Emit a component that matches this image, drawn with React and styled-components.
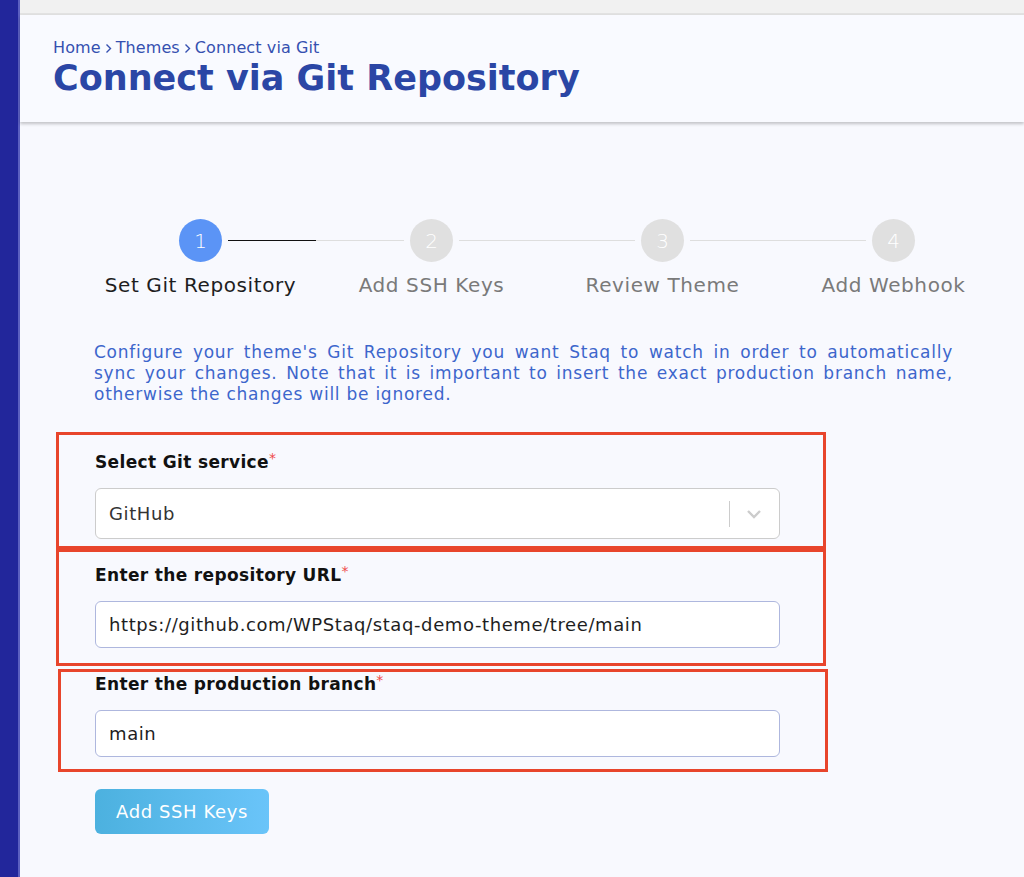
import React from "react";
import styled, { createGlobalStyle } from "styled-components";

const GlobalStyle = createGlobalStyle`
  * {
    box-sizing: border-box;
  }
  body {
    margin: 0;
    background: #f8f9fe;
    font-family: "DejaVu Sans", Inter, sans-serif;
  }
`;

const steps = [
  { n: 1, label: "Set Git Repository" },
  { n: 2, label: "Add SSH Keys" },
  { n: 3, label: "Review Theme" },
  { n: 4, label: "Add Webhook" },
];

const descLines = [
  "Configure your theme's Git Repository you want Staq to watch in order to automatically",
  "sync your changes. Note that it is important to insert the exact production branch name,",
  "otherwise the changes will be ignored.",
];

function Chevron() {
  return (
    <svg width="9" height="11" viewBox="0 0 9 11" fill="none">
      <path d="M2.5 1.5 L6.5 5.5 L2.5 9.5" stroke="#3550b0" strokeWidth="1.4" />
    </svg>
  );
}

export default function App() {
  return (
    <>
      <GlobalStyle />
      <Page>
        <Sidebar />
        <Main>
          <TopStrip />
          <Header>
            <Breadcrumb>
              <span>Home</span>
              <Chevron />
              <span>Themes</span>
              <Chevron />
              <span>Connect via Git</span>
            </Breadcrumb>
            <Title>Connect via Git Repository</Title>
          </Header>
          <Content>
            <Stepper>
              {steps.map((step, i) => (
                <Step key={step.n}>
                  <StepHead>
                    <HalfLine $hidden={i === 0} />
                    <Circle $active={i === 0}>{step.n}</Circle>
                    <HalfLine $hidden={i === steps.length - 1} $done={i === 0} />
                  </StepHead>
                  <StepLabel $active={i === 0}>{step.label}</StepLabel>
                </Step>
              ))}
            </Stepper>

            <Description>
              {descLines.map((line, i) => (
                <DescLine key={i} $last={i === descLines.length - 1}>
                  {line}
                </DescLine>
              ))}
            </Description>

            <Field $pt={16} $pb={7} $mt={27}>
              <Label>
                Select Git service<Star>*</Star>
              </Label>
              <SelectBox>
                <SelectValue>GitHub</SelectValue>
                <Indicators>
                  <Separator />
                  <svg width="20" height="20" viewBox="0 0 20 20">
                    <path
                      d="M4 7 L10 13 L16 7"
                      fill="none"
                      stroke="#cccccc"
                      strokeWidth="2.4"
                    />
                  </svg>
                </Indicators>
              </SelectBox>
            </Field>

            <Field $pt={12} $pb={15}>
              <Label>
                Enter the repository URL<Star>*</Star>
              </Label>
              <Input
                readOnly
                value="https://github.com/WPStaq/staq-demo-theme/tree/main"
              />
            </Field>

            <Field $pt={1} $pb={12} $shift={2} $mt={3}>
              <Label>
                Enter the production branch<Star>*</Star>
              </Label>
              <Input readOnly value="main" />
            </Field>

            <Button>Add SSH Keys</Button>
          </Content>
        </Main>
      </Page>
    </>
  );
}

const Page = styled.div`
  display: flex;
  min-height: 877px;
`;

const Sidebar = styled.div`
  width: 20px;
  flex-shrink: 0;
  background: #22269b;
  border-right: 2px solid #5b5fc0;
`;

const Main = styled.div`
  flex: 1;
  display: flex;
  flex-direction: column;
  min-width: 0;
`;

const TopStrip = styled.div`
  height: 15px;
  background: #f1f1f1;
  border-bottom: 2px solid #e2e2e2;
`;

const Header = styled.div`
  height: 107px;
  padding: 24px 33px 0;
  background: #f9faff;
  box-shadow: 0 2px 3px rgba(0, 0, 0, 0.22);
  position: relative;
  z-index: 1;
`;

const Breadcrumb = styled.div`
  display: flex;
  align-items: center;
  gap: 3px;
  color: #3550b0;
  font-size: 16px;
  line-height: 18px;
  letter-spacing: 0.1px;
`;

const Title = styled.h1`
  margin: 0;
  color: #2b46a5;
  font-size: 35px;
  line-height: 42px;
  font-weight: 700;
`;

const Content = styled.div`
  padding: 97px 0 40px 36px;
`;

const Stepper = styled.div`
  display: grid;
  grid-template-columns: repeat(4, 231px);
  margin-left: 29px;
`;

const Step = styled.div`
  display: flex;
  flex-direction: column;
  align-items: center;
`;

const StepHead = styled.div`
  display: flex;
  align-items: center;
  width: 100%;
  gap: 6px;
`;

const HalfLine = styled.div`
  flex: 1;
  height: ${(p) => (p.$done ? "1.5px" : "1px")};
  background: ${(p) => (p.$hidden ? "transparent" : p.$done ? "#111111" : "#dedede")};
`;

const Circle = styled.div`
  width: 43px;
  height: 43px;
  border-radius: 50%;
  flex-shrink: 0;
  display: flex;
  align-items: center;
  justify-content: center;
  background: ${(p) => (p.$active ? "#5b94f6" : "#e0e0e0")};
  color: #ffffff;
  font-size: 20px;
  font-weight: 300;
`;

const StepLabel = styled.div`
  margin-top: 11px;
  font-size: 20px;
  line-height: 24px;
  letter-spacing: 0.6px;
  white-space: nowrap;
  color: ${(p) => (p.$active ? "#1e1e1e" : "#7a7a7a")};
`;

const Description = styled.div`
  margin: 45px 0 0 38px;
  width: 859px;
  color: #3d66cc;
  font-size: 17px;
  line-height: 21px;
  letter-spacing: 0.75px;
`;

const DescLine = styled.span`
  display: block;
  text-align: justify;
  text-align-last: ${(p) => (p.$last ? "left" : "justify")};
`;

const Field = styled.div`
  width: 770px;
  margin-top: ${(p) => p.$mt ?? 0}px;
  margin-left: ${(p) => p.$shift ?? 0}px;
  padding: ${(p) => p.$pt}px 0 ${(p) => p.$pb}px ${(p) => 36 - (p.$shift ?? 0)}px;
  border: 3px solid #e8452c;
`;

const Label = styled.div`
  font-size: 17px;
  line-height: 22px;
  font-weight: 700;
  letter-spacing: 0.35px;
  color: #111111;
  margin-bottom: 15px;
`;

const Star = styled.span`
  color: #ef4b4b;
  font-weight: 400;
  font-size: 14px;
  vertical-align: top;
  line-height: 14px;
`;

const SelectBox = styled.div`
  width: 685px;
  height: 51px;
  background: #ffffff;
  border: 1px solid #cccccc;
  border-radius: 6px;
  display: flex;
  align-items: center;
  padding-left: 13px;
`;

const SelectValue = styled.div`
  flex: 1;
  font-size: 18px;
  letter-spacing: 0.6px;
  color: #333333;
`;

const Indicators = styled.div`
  display: flex;
  align-items: center;
  gap: 14px;
  padding-right: 15px;
`;

const Separator = styled.div`
  width: 1px;
  height: 26px;
  background: #cccccc;
`;

const Input = styled.input`
  display: block;
  width: 685px;
  height: 47px;
  padding: 0 13px;
  border: 1px solid #aeb7de;
  border-radius: 6px;
  background: #ffffff;
  font-family: inherit;
  font-size: 18px;
  letter-spacing: 0.6px;
  color: #1e1e1e;
  outline: none;
`;

const Button = styled.button`
  display: block;
  margin: 17px 0 0 39px;
  width: 174px;
  height: 45px;
  border: none;
  border-radius: 6px;
  background: linear-gradient(90deg, #4cb1df, #6ac4f9);
  color: #ffffff;
  font-family: inherit;
  font-size: 18px;
  letter-spacing: 0.6px;
  cursor: pointer;
`;
